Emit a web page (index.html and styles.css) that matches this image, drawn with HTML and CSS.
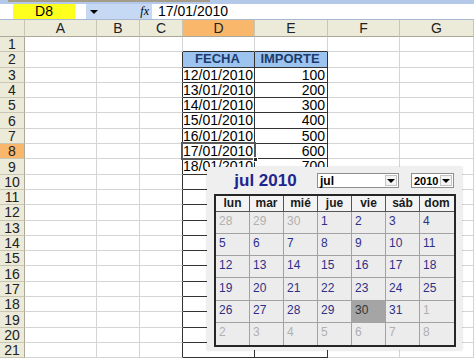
FILE: index.html
```html
<!DOCTYPE html>
<html lang="es">
<head>
    <meta charset="UTF-8">
    <meta name="viewport" content="width=device-width, initial-scale=1.0">
    <title>Libro1 - Calendario</title>
    <link rel="stylesheet" href="styles.css">
</head>
<body>
    <div class="app">
        <div class="topbar">
            <div class="toolbar-edge"></div>
        </div>

        <div class="formula-bar">
            <div class="name-box"><span class="name-hl">D8</span></div>
            <div class="name-drop"><span class="arrow"></span></div>
            <div class="fx">fx</div>
            <div class="formula-input">17/01/2010</div>
        </div>

        <div class="sheet" id="sheet"></div>

        <div class="calendar">
            <div class="cal-top">
                <div class="cal-title">jul 2010</div>
                <div class="select select-month">
                    <span>jul</span>
                    <span class="select-btn"><span class="arrow"></span></span>
                </div>
                <div class="select select-year">
                    <span>2010</span>
                    <span class="select-btn"><span class="arrow"></span></span>
                </div>
            </div>
            <div class="cal-grid" id="calGrid">
                <div class="cal-head">lun</div>
                <div class="cal-head">mar</div>
                <div class="cal-head">mié</div>
                <div class="cal-head">jue</div>
                <div class="cal-head">vie</div>
                <div class="cal-head">sáb</div>
                <div class="cal-head">dom</div>
            </div>
        </div>
    </div>

    <script>
        // Build the worksheet grid
        const sheet = document.getElementById('sheet');
        const cols = ['', 'A', 'B', 'C', 'D', 'E', 'F', 'G'];
        const data = {
            2: ['FECHA', 'IMPORTE'],
            3: ['12/01/2010', '100'],
            4: ['13/01/2010', '200'],
            5: ['14/01/2010', '300'],
            6: ['15/01/2010', '400'],
            7: ['16/01/2010', '500'],
            8: ['17/01/2010', '600'],
            9: ['18/01/2010', '700']
        };

        function addCell(text, className) {
            const cell = document.createElement('div');
            cell.className = className;
            cell.textContent = text;
            sheet.appendChild(cell);
            return cell;
        }

        cols.forEach((c, i) => {
            addCell(c, 'col-head' + (c === 'D' ? ' active' : '') + (i === 0 ? ' corner' : ''));
        });

        for (let r = 1; r <= 21; r++) {
            addCell(r, 'row-head' + (r === 8 ? ' active' : ''));
            for (let c = 1; c < cols.length; c++) {
                let cls = 'cell';
                let text = '';
                if (c === 3 && r >= 2) cls += ' edge-l';
                if ((c === 4 || c === 5) && r === 1) cls += ' edge-t';
                if ((c === 4 || c === 5) && r >= 2) {
                    cls += ' boxed';
                    if (data[r]) text = data[r][c - 4];
                    if (r === 2) cls += ' table-head';
                }
                if (c === 4 && r === 8) cls += ' selected';
                const cell = addCell(text, cls);
                if (c === 4 && r === 8) {
                    const handle = document.createElement('span');
                    handle.className = 'fill-handle';
                    cell.appendChild(handle);
                }
            }
        }

        // Calendar days for julio 2010
        const grid = document.getElementById('calGrid');
        const days = [];
        [28, 29, 30].forEach(d => days.push({ d, other: true }));
        for (let d = 1; d <= 31; d++) days.push({ d, other: false });
        for (let d = 1; d <= 8; d++) days.push({ d, other: true });

        days.forEach(day => {
            const el = document.createElement('div');
            el.className = 'cal-day';
            if (day.other) el.className += ' other';
            if (!day.other && day.d === 30) el.className += ' today';
            el.textContent = day.d;
            grid.appendChild(el);
        });
    </script>
</body>
</html>
```

FILE: styles.css
```css
* {
    margin: 0;
    padding: 0;
    box-sizing: border-box;
}

body {
    font-family: 'Liberation Sans Narrow', 'Liberation Sans', Arial, sans-serif;
    background: #ffffff;
    color: #000;
    width: 474px;
    height: 359px;
    overflow: hidden;
}

.app {
    position: relative;
    width: 474px;
    height: 359px;
    overflow: hidden;
}

/* toolbar remains */
.topbar {
    height: 4px;
    background: #b4c8ea;
    padding-left: 8px;
}

.toolbar-edge {
    width: 202px;
    height: 2px;
    background: #a39d8a;
}

/* formula bar */
.formula-bar {
    display: flex;
    height: 16px;
    background: #c5d8f4;
    border-bottom: 1px solid #a8b8d0;
}

.name-box {
    width: 86px;
    background: #fff;
    padding-left: 13px;
}

.name-hl {
    display: block;
    width: 62px;
    height: 15px;
    background: #ffff1e;
    text-align: center;
    font-size: 14px;
    line-height: 15px;
}

.name-drop {
    width: 16px;
    display: flex;
    align-items: center;
    justify-content: center;
}

.arrow {
    display: block;
    width: 0;
    height: 0;
    border-left: 4px solid transparent;
    border-right: 4px solid transparent;
    border-top: 4px solid #000;
}

.fx {
    width: 50px;
    padding-right: 3px;
    text-align: right;
    font-family: 'Liberation Serif', serif;
    font-style: italic;
    font-size: 12px;
    line-height: 15px;
}

.formula-input {
    flex: 1;
    background: #fff;
    padding-left: 6px;
    font-size: 14px;
    line-height: 15px;
}

/* worksheet */
.sheet {
    display: grid;
    grid-template-columns: 25px 72px 43px 43px 72px 73px 72px 74px;
    grid-template-rows: 17px repeat(21, 15.3px);
}

.col-head,
.row-head {
    background: #ecead9;
    color: #222;
    font-size: 14px;
    display: flex;
    align-items: center;
    justify-content: center;
    border-right: 1px solid #c9c6b4;
    border-bottom: 1px solid #c9c6b4;
}

.col-head {
    border-bottom-color: #aca899;
}

.row-head {
    border-right-color: #aca899;
}

.col-head.active,
.row-head.active {
    background: #f9b76c;
}

.cell {
    border-right: 1px solid #d4d4d4;
    border-bottom: 1px solid #d4d4d4;
    font-size: 14px;
    line-height: 14px;
    text-align: right;
    padding-right: 2px;
    white-space: nowrap;
    overflow: hidden;
}

.cell.edge-l {
    border-right-color: #333;
}

.cell.edge-t {
    border-bottom-color: #333;
}

.cell.boxed {
    border-right-color: #333;
    border-bottom-color: #333;
}

.cell.table-head {
    background: #9dc4ef;
    color: #1b3b6d;
    font-weight: bold;
    text-align: center;
    font-size: 13px;
}

.cell.selected {
    position: relative;
    overflow: visible;
}

.cell.selected::after {
    content: "";
    position: absolute;
    left: -2px;
    top: -2px;
    right: -2px;
    bottom: -2px;
    border: 2px solid #5a5a5a;
}

.fill-handle {
    position: absolute;
    right: -4px;
    bottom: -4px;
    width: 5px;
    height: 5px;
    background: #222;
    border: 1px solid #fff;
    z-index: 2;
}

/* date picker popup */
.calendar {
    position: absolute;
    left: 207px;
    top: 167px;
    width: 255px;
    height: 183px;
    background: #efefef;
    box-shadow: 0 0 2px rgba(0, 0, 0, 0.2);
    padding: 6px 6px 3px 7px;
}

.cal-top {
    display: flex;
    align-items: center;
    height: 15px;
    margin-bottom: 6px;
}

.cal-title {
    width: 103px;
    text-align: center;
    color: #1f2590;
    font-weight: bold;
    font-size: 17px;
    line-height: 15px;
}

.select {
    display: flex;
    align-items: center;
    justify-content: space-between;
    height: 15px;
    background: #fff;
    border: 1px solid #8e8e8e;
    font-weight: bold;
    font-size: 12px;
    padding-left: 2px;
    padding-right: 1px;
}

.select-month {
    width: 82px;
}

.select-year {
    width: 43px;
    margin-left: 12px;
    font-size: 11px;
}

.select-btn {
    width: 12px;
    height: 11px;
    background: #f4f4f4;
    border: 1px solid #c3c3c3;
    display: flex;
    align-items: center;
    justify-content: center;
}

.cal-grid {
    display: grid;
    grid-template-columns: repeat(7, 1fr);
    grid-template-rows: 16px repeat(6, 1fr);
    height: 153px;
    border: 2px solid #262626;
}

.cal-head {
    background: #f3f3f3;
    font-weight: bold;
    font-size: 12px;
    color: #1a1a1a;
    text-align: center;
    line-height: 14px;
    border-right: 1px solid #555;
    border-bottom: 1px solid #555;
}

.cal-day {
    background: #ececec;
    color: #2e3087;
    font-size: 12px;
    display: flex;
    align-items: center;
    padding-left: 3px;
    padding-bottom: 3px;
    border-right: 1px solid #a2a2a2;
    border-bottom: 1px solid #a2a2a2;
}

.cal-head:nth-child(7n),
.cal-day:nth-child(7n) {
    border-right: none;
}

.cal-day:nth-last-child(-n+7) {
    border-bottom: none;
}

.cal-day.other {
    color: #b0b0b0;
}

.cal-day.today {
    background: #a5a5a5;
    color: #333;
}
```
